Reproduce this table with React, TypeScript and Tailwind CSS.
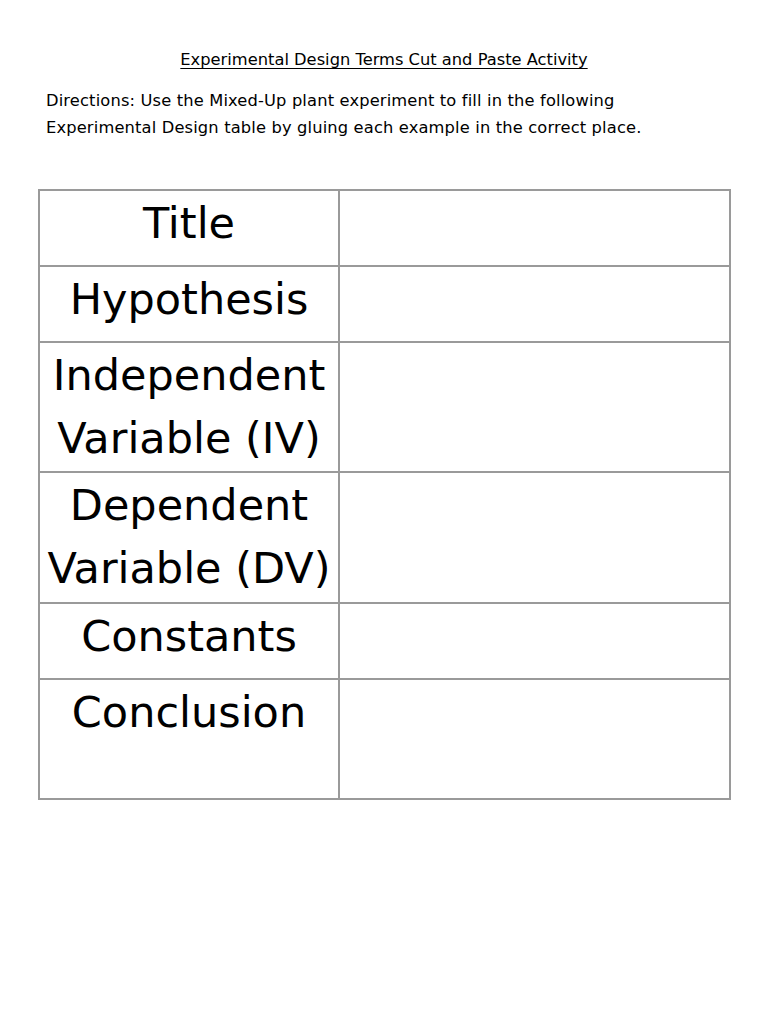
import React from "react";

const rows: { label: string[]; h: number }[] = [
  { label: ["Title"], h: 76 },
  { label: ["Hypothesis"], h: 76 },
  { label: ["Independent", "Variable (IV)"], h: 130 },
  { label: ["Dependent", "Variable (DV)"], h: 131 },
  { label: ["Constants"], h: 76 },
  { label: ["Conclusion"], h: 118 },
];

export default function App() {
  return (
    <div
      className="w-[768px] h-[1024px] bg-white text-black"
      style={{ fontFamily: '"DejaVu Sans", "Open Sans", sans-serif' }}
    >
      <div className="pt-[49px] text-center text-[16.3px] leading-[22px]">
        <span className="underline underline-offset-[3px]">
          Experimental Design Terms Cut and Paste Activity
        </span>
      </div>
      <div className="pl-[46px] pt-[16px] text-[16.3px] leading-[27px] tracking-[0.15px]">
        <div>Directions: Use the Mixed-Up plant experiment to fill in the following</div>
        <div>Experimental Design table by gluing each example in the correct place.</div>
      </div>
      <div className="ml-[38px] mt-[48px] w-[693px] border-2 border-[#9a9a9a] flex flex-col">
        {rows.map((r, i) => (
          <div
            key={i}
            className={`flex ${i < rows.length - 1 ? "border-b-2 border-[#9a9a9a]" : ""}`}
            style={{ height: r.h }}
          >
            <div className="w-[300px] border-r-2 border-[#9a9a9a] text-center text-[43px] leading-[63px] pt-[1px]">
              {r.label.map((l, j) => (
                <div key={j}>{l}</div>
              ))}
            </div>
            <div className="flex-1" />
          </div>
        ))}
      </div>
    </div>
  );
}
